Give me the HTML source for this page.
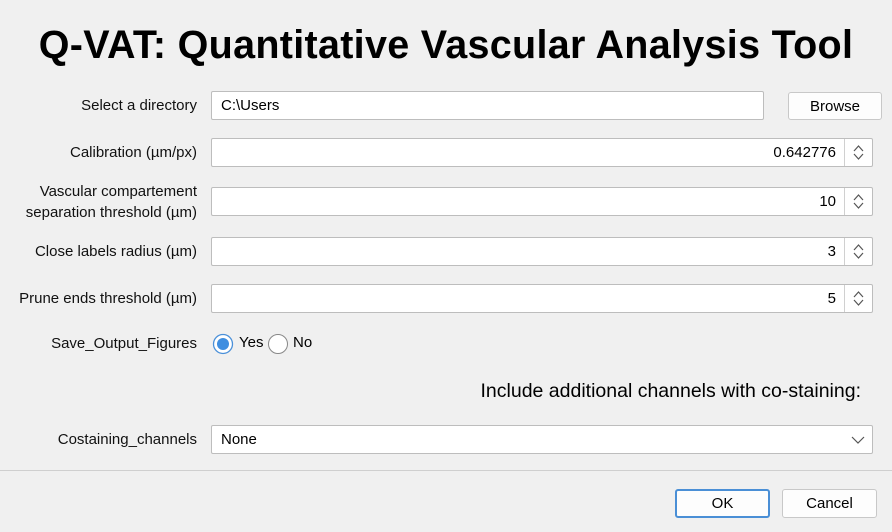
<!DOCTYPE html>
<html><head><style>
body{margin:0;width:892px;height:532px;background:#f0f0f0;font-family:"Liberation Sans",sans-serif;color:#000;position:relative;overflow:hidden}
.a{position:absolute}
h1{position:absolute;left:0;top:21px;width:892px;margin:0;text-align:center;font-size:39.5px;font-weight:bold;letter-spacing:0.3px;line-height:48px}
.lbl{position:absolute;right:695px;font-size:15px;text-align:right;line-height:22px;color:#111}
.inp{position:absolute;left:211px;background:#fff;border:1px solid #bdbdbd;border-radius:2px;box-sizing:border-box;font-size:15px}
.spin{width:662px;height:29px}
.spin .v{position:absolute;right:36px;top:5px}
.spin .s{position:absolute;right:0;top:0;width:27px;height:27px;border-left:1px solid #d0d0d0}
.btn{position:absolute;background:#fdfdfd;border:1px solid #c8c8c8;border-radius:3px;box-sizing:border-box;font-size:15px;text-align:center}
</style></head><body>
<h1>Q-VAT: Quantitative Vascular Analysis Tool</h1>

<div class="lbl" style="top:95px">Select a directory</div>
<div class="inp" style="top:91px;width:553px;height:29px"><span class="a" style="left:9px;top:5px">C:\Users</span></div>
<div class="btn" style="left:788px;top:92px;width:94px;height:28px;line-height:27px">Browse</div>

<div class="lbl" style="top:142px">Calibration (µm/px)</div>
<div class="inp spin" style="top:138px"><span class="v">0.642776</span><div class="s"><svg width="27" height="27"><path d="M9 12l4.5-5 4.5 5M9 15l4.5 5 4.5-5" fill="none" stroke="#555" stroke-width="1.2"/></svg></div></div>

<div class="lbl" style="top:181px;line-height:21px">Vascular compartement<br>separation threshold (µm)</div>
<div class="inp spin" style="top:187px"><span class="v">10</span><div class="s"><svg width="27" height="27"><path d="M9 12l4.5-5 4.5 5M9 15l4.5 5 4.5-5" fill="none" stroke="#555" stroke-width="1.2"/></svg></div></div>

<div class="lbl" style="top:241px">Close labels radius (µm)</div>
<div class="inp spin" style="top:237px"><span class="v">3</span><div class="s"><svg width="27" height="27"><path d="M9 12l4.5-5 4.5 5M9 15l4.5 5 4.5-5" fill="none" stroke="#555" stroke-width="1.2"/></svg></div></div>

<div class="lbl" style="top:288px">Prune ends threshold (µm)</div>
<div class="inp spin" style="top:284px"><span class="v">5</span><div class="s"><svg width="27" height="27"><path d="M9 12l4.5-5 4.5 5M9 15l4.5 5 4.5-5" fill="none" stroke="#555" stroke-width="1.2"/></svg></div></div>

<div class="lbl" style="top:333px">Save_Output_Figures</div>
<svg class="a" style="left:212px;top:333px" width="24" height="24"><circle cx="11" cy="11" r="9.5" fill="#fff" stroke="#4a90d9" stroke-width="1.3"/><circle cx="11" cy="11" r="6" fill="#3f8ee0"/></svg>
<span class="a" style="left:239px;top:334px;font-size:15px">Yes</span>
<svg class="a" style="left:267px;top:333px" width="24" height="24"><circle cx="11" cy="11" r="9.5" fill="#fff" stroke="#888" stroke-width="1"/></svg>
<span class="a" style="left:293px;top:334px;font-size:15px">No</span>

<div class="a" style="right:31px;top:380px;font-size:19.5px">Include additional channels with co-staining:</div>

<div class="lbl" style="top:429px">Costaining_channels</div>
<div class="inp" style="top:425px;width:662px;height:29px"><span class="a" style="left:9px;top:5px">None</span>
<svg class="a" style="right:6px;top:7px" width="16" height="14"><path d="M2 4l6 6 6-6" fill="none" stroke="#555" stroke-width="1.2"/></svg></div>

<div class="a" style="left:0;top:470px;width:892px;height:1px;background:#cfcfcf"></div>

<div class="btn" style="left:675px;top:489px;width:95px;height:29px;line-height:26px;border:2px solid #4a8fd6">OK</div>
<div class="btn" style="left:782px;top:489px;width:95px;height:29px;line-height:27px">Cancel</div>
</body></html>
